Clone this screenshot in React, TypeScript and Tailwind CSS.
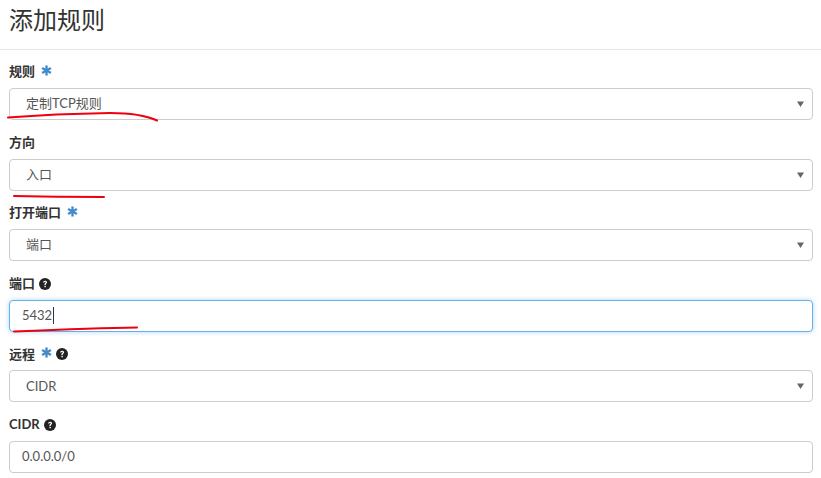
import React from "react";

const font = { fontFamily: '"Lato", "Noto Sans CJK SC", sans-serif' };

const Star = () => (
  <svg width="11" height="11" viewBox="0 0 12 12" className="ml-[6px] -mt-[3px]">
    <g stroke="#428bca" strokeWidth="2.6" strokeLinecap="butt">
      <line x1="6" y1="0.5" x2="6" y2="11.5" />
      <line x1="1.2" y1="3.2" x2="10.8" y2="8.8" />
      <line x1="1.2" y1="8.8" x2="10.8" y2="3.2" />
    </g>
  </svg>
);

const Help = () => (
  <svg width="12" height="12" viewBox="0 0 16 16" className="ml-[4px]">
    <circle cx="8" cy="8" r="8" fill="#222" />
    <path
      d="M5.4 6.1c0-1.6 1.2-2.6 2.7-2.6s2.7.9 2.7 2.3c0 1.7-1.8 1.9-1.8 3.1v.3H7.2v-.5c0-1.7 1.7-1.9 1.7-2.8 0-.5-.3-.8-.8-.8-.5 0-.9.4-.9 1H5.4z"
      fill="#fff"
    />
    <rect x="7.2" y="10.4" width="1.9" height="1.9" fill="#fff" />
  </svg>
);

const Label = ({ text, star, help }: { text: string; star?: boolean; help?: boolean }) => (
  <div className="flex items-center h-[20px] mb-[6px] text-[13px] font-bold text-[#333]">
    <span>{text}</span>
    {star && <Star />}
    {help && <Help />}
  </div>
);

const Select = ({ value }: { value: string }) => (
  <div className="h-[32px] flex items-center justify-between border border-[#ccc] rounded-[4px] bg-white pl-[16px] pr-[8px] text-[13px] text-[#555]">
    <span>{value}</span>
    <svg width="7" height="6" viewBox="0 0 7 6">
      <path d="M0 0.5h7L3.5 6z" fill="#666" />
    </svg>
  </div>
);

const Input = ({ value, focused }: { value: string; focused?: boolean }) => (
  <div
    className={`h-[32px] flex items-center border rounded-[4px] bg-white px-[12px] text-[13px] text-[#555] ${
      focused ? "border-[#66afe9] shadow-[0_0_5px_rgba(102,175,233,0.5)]" : "border-[#ccc]"
    }`}
  >
    <span>{value}</span>
    {focused && <span className="w-px h-[17px] bg-[#333] ml-[1px]" />}
  </div>
);

const Group = ({ children }: { children: React.ReactNode }) => (
  <div className="mb-[12.6px]">{children}</div>
);

export default function App() {
  return (
    <div className="relative w-[821px] h-[478px] bg-white overflow-hidden" style={font}>
      <div className="h-[50px] border-b border-[#e5e5e5] px-[9px] pt-[3px]">
        <h1 className="text-[24px] leading-[34px] font-normal text-[#333]">添加规则</h1>
      </div>

      <div className="pl-[9px] pr-[8px] pt-[12px]">
        <Group>
          <Label text="规则" star />
          <Select value="定制TCP规则" />
        </Group>
        <Group>
          <Label text="方向" />
          <Select value="入口" />
        </Group>
        <Group>
          <Label text="打开端口" star />
          <Select value="端口" />
        </Group>
        <Group>
          <Label text="端口" help />
          <Input value="5432" focused />
        </Group>
        <Group>
          <Label text="远程" star help />
          <Select value="CIDR" />
        </Group>
        <Group>
          <Label text="CIDR" help />
          <Input value="0.0.0.0/0" />
        </Group>
      </div>

      {/* hand-drawn red annotations */}
      <svg className="absolute left-0 top-0 pointer-events-none" width="821" height="478">
        <g fill="none" stroke="#ee0010" strokeWidth="2" strokeLinecap="round">
          <path d="M8 117.5 C 40 115, 80 113.5, 110 113 C 130 113, 145 115, 157 120.5" />
          <path d="M14 196 C 40 196.5, 80 197, 104 197" />
          <path d="M14 331.5 C 50 330, 100 328, 137 327.5" />
        </g>
      </svg>
    </div>
  );
}
